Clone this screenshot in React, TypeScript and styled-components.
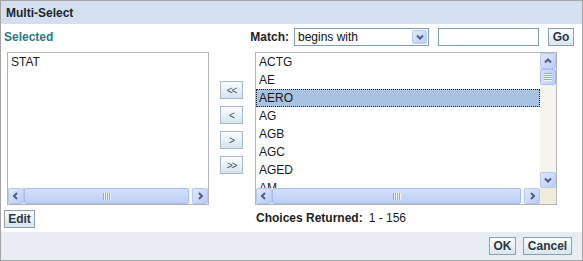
import React from 'react'
import styled, { createGlobalStyle } from 'styled-components'

const GlobalStyle = createGlobalStyle`
  html, body {
    margin: 0;
    padding: 0;
    background: #ffffff;
  }
  body {
    font-family: "Liberation Sans", Arial, sans-serif;
    font-size: 12px;
    color: #1a1a1a;
  }
`

const Dialog = styled.div`
  width: 583px;
  height: 261px;
  box-sizing: border-box;
  border: 1px solid #a4a4a4;
  display: flex;
  flex-direction: column;
  background: #ffffff;
`

const TitleBar = styled.div`
  height: 23px;
  flex: none;
  display: flex;
  align-items: center;
  padding-left: 5px;
  background: #d4e0ef;
  font-weight: bold;
  font-size: 12px;
  color: #1b2631;
`

const Body = styled.div`
  flex: 1;
  display: grid;
  grid-template-columns: 205px 46px 302px 1fr;
  grid-template-rows: 28px 153px 1fr;
  padding-left: 3px;
`

const SectionLabel = styled.div`
  grid-column: 1;
  display: flex;
  align-items: center;
  padding-bottom: 2px;
  font-weight: bold;
  font-size: 12px;
  color: #2d7a7e;
`

const MatchRow = styled.div`
  grid-column: 2 / 5;
  display: flex;
  align-items: center;
  justify-content: flex-end;
  padding-right: 8px;
  padding-bottom: 2px;
`

const FieldLabel = styled.span`
  font-weight: bold;
  font-size: 12px;
  color: #222;
  margin-right: 5px;
`

const SelectBox = styled.div`
  width: 135px;
  height: 18px;
  box-sizing: border-box;
  border: 1px solid #7f9db9;
  display: flex;
  align-items: center;
  justify-content: space-between;
  padding-left: 3px;
  padding-right: 1px;
  margin-right: 9px;
  font-size: 12px;
  color: #111;
`

const DropButton = styled.div`
  width: 15px;
  height: 14px;
  box-sizing: border-box;
  border: 1px solid #b9cbf1;
  border-radius: 2px;
  background: linear-gradient(135deg, #e1eafd, #b8ccf6);
  display: flex;
  align-items: center;
  justify-content: center;
`

const TextField = styled.div`
  width: 101px;
  height: 18px;
  box-sizing: border-box;
  border: 1px solid #7f9db9;
  margin-right: 9px;
  background: #fff;
`

const PushButton = styled.div<{ $w: number }>`
  width: ${p => p.$w}px;
  height: 18px;
  box-sizing: border-box;
  border: 1px solid #8d9eac;
  background: linear-gradient(#fbfdfe, #d9e5ee);
  display: flex;
  align-items: center;
  justify-content: center;
  font-weight: bold;
  font-size: 12px;
  color: #2b3744;
`

const ListBox = styled.div<{ $vscroll?: boolean }>`
  grid-row: 2;
  box-sizing: border-box;
  border: 1px solid #b4b4b4;
  display: grid;
  grid-template-columns: ${p => (p.$vscroll ? '1fr 16px' : '1fr')};
  grid-template-rows: 1fr 16px;
  overflow: hidden;
`

const LeftList = styled(ListBox)`
  grid-column: 1;
  margin-left: 3px;
  width: 202px;
`

const RightList = styled(ListBox)`
  grid-column: 3;
  width: 302px;
`

const Items = styled.div`
  overflow: hidden;
  min-width: 0;
`

const Item = styled.div<{ $selected?: boolean }>`
  height: 18px;
  box-sizing: border-box;
  display: flex;
  align-items: center;
  padding-left: 2px;
  font-size: 12px;
  color: #1a1a1a;
  background: ${p => (p.$selected ? '#a7c3e0' : 'transparent')};
  border: 1px dotted ${p => (p.$selected ? '#222' : 'transparent')};
`

const HScroll = styled.div`
  display: flex;
  align-items: stretch;
  background: #f5f4ef;
  min-width: 0;
`

const VScroll = styled.div`
  grid-row: 1;
  grid-column: 2;
  display: flex;
  flex-direction: column;
  background: #f5f4ef;
`

const Corner = styled.div`
  background: #efebdd;
`

const ArrowButton = styled.div`
  width: 16px;
  height: 16px;
  flex: none;
  box-sizing: border-box;
  border: 1px solid #b7c8ef;
  border-radius: 2px;
  background: linear-gradient(135deg, #e0e9fd, #b9cdf6);
  display: flex;
  align-items: center;
  justify-content: center;
`

const Thumb = styled.div<{ $vertical?: boolean }>`
  box-sizing: border-box;
  border: 1px solid #a9bfea;
  border-radius: 2px;
  background: ${p =>
    p.$vertical
      ? 'linear-gradient(90deg, #d3dffb, #bccff6)'
      : 'linear-gradient(#d3dffb, #bccff6)'};
  display: flex;
  align-items: center;
  justify-content: center;
  ${p => (p.$vertical ? 'height: 16px; width: 16px;' : 'flex: 1; margin-right: 3px;')}
`

const Grip = styled.div<{ $vertical?: boolean }>`
  width: 8px;
  height: ${p => (p.$vertical ? '8px' : '7px')};
  background: ${p =>
    p.$vertical
      ? 'repeating-linear-gradient(180deg, #8ea9e2 0 1px, #eef3fe 1px 2px)'
      : 'repeating-linear-gradient(90deg, #8ea9e2 0 1px, #eef3fe 1px 2px)'};
`

const Spacer = styled.div`
  flex: 1;
`

const MoveColumn = styled.div`
  grid-column: 2;
  grid-row: 2;
  display: flex;
  flex-direction: column;
  align-items: center;
  gap: 7px;
  padding-top: 29px;
  padding-right: 1px;
`

const MoveButton = styled.div`
  width: 23px;
  height: 18px;
  box-sizing: border-box;
  border: 1px solid #a9b9c6;
  background: linear-gradient(#fbfdfe, #d6e4ee);
  display: flex;
  align-items: center;
  justify-content: center;
  font-size: 10px;
  color: #4a5560;
  letter-spacing: -1px;
`

const EditCell = styled.div`
  grid-column: 1;
  grid-row: 3;
  display: flex;
  align-items: center;
  padding-top: 1px;
`

const ChoicesCell = styled.div`
  grid-column: 3;
  grid-row: 3;
  display: flex;
  align-items: center;
  padding-left: 1px;
  padding-bottom: 1px;
  font-size: 12px;
  color: #1a1a1a;
  b {
    color: #222;
    margin-right: 6px;
  }
`

const Footer = styled.div`
  height: 27px;
  flex: none;
  background: #e8edf3;
  display: flex;
  align-items: center;
  justify-content: flex-end;
  gap: 7px;
  padding-right: 10px;
  padding-bottom: 1px;
`

type Dir = 'left' | 'right' | 'up' | 'down'

const chevronPaths: Record<Dir, string> = {
  left: 'M6 2 L3 5 L6 8',
  right: 'M4 2 L7 5 L4 8',
  up: 'M2 6.5 L5 3.5 L8 6.5',
  down: 'M2 3.5 L5 6.5 L8 3.5',
}

const Chevron = ({ dir }: { dir: Dir }) => (
  <svg width="10" height="10" viewBox="0 0 10 10">
    <path d={chevronPaths[dir]} fill="none" stroke="#4c5f86" strokeWidth="2" />
  </svg>
)

const HorizontalBar = () => (
  <HScroll>
    <ArrowButton><Chevron dir="left" /></ArrowButton>
    <Thumb><Grip /></Thumb>
    <ArrowButton><Chevron dir="right" /></ArrowButton>
  </HScroll>
)

const VerticalBar = () => (
  <VScroll>
    <ArrowButton><Chevron dir="up" /></ArrowButton>
    <Thumb $vertical><Grip $vertical /></Thumb>
    <Spacer />
    <ArrowButton><Chevron dir="down" /></ArrowButton>
  </VScroll>
)

const choices = ['ACTG', 'AE', 'AERO', 'AG', 'AGB', 'AGC', 'AGED', 'AM']

export default function App() {
  return (
    <>
      <GlobalStyle />
      <Dialog>
        <TitleBar>Multi-Select</TitleBar>
        <Body>
          <SectionLabel>Selected</SectionLabel>
          <MatchRow>
            <FieldLabel>Match:</FieldLabel>
            <SelectBox>
              <span>begins with</span>
              <DropButton><Chevron dir="down" /></DropButton>
            </SelectBox>
            <TextField />
            <PushButton $w={26}>Go</PushButton>
          </MatchRow>

          <LeftList>
            <Items>
              <Item>STAT</Item>
            </Items>
            <HorizontalBar />
          </LeftList>

          <MoveColumn>
            <MoveButton>&lt;&lt;</MoveButton>
            <MoveButton>&lt;</MoveButton>
            <MoveButton>&gt;</MoveButton>
            <MoveButton>&gt;&gt;</MoveButton>
          </MoveColumn>

          <RightList $vscroll>
            <Items>
              {choices.map(c => (
                <Item key={c} $selected={c === 'AERO'}>{c}</Item>
              ))}
            </Items>
            <VerticalBar />
            <HorizontalBar />
            <Corner />
          </RightList>

          <EditCell>
            <PushButton $w={31}>Edit</PushButton>
          </EditCell>
          <ChoicesCell>
            <b>Choices Returned:</b>1 - 156
          </ChoicesCell>
        </Body>
        <Footer>
          <PushButton $w={27}>OK</PushButton>
          <PushButton $w={49}>Cancel</PushButton>
        </Footer>
      </Dialog>
    </>
  )
}
